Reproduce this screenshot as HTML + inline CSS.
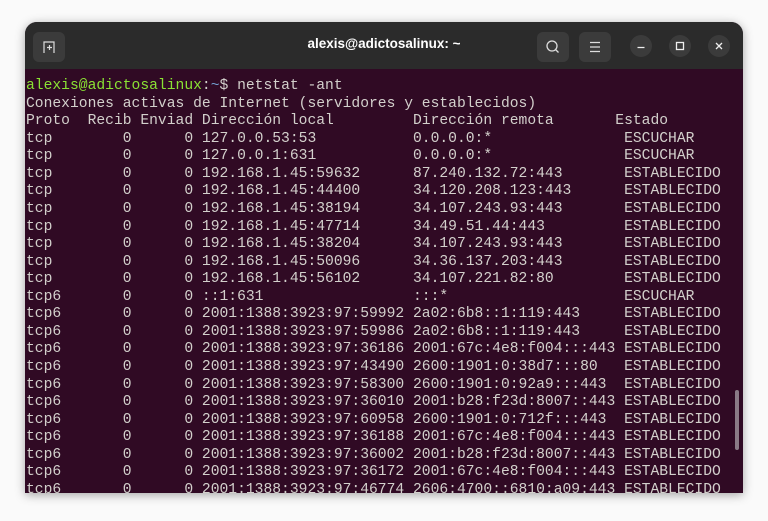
<!DOCTYPE html>
<html><head><meta charset="utf-8"><style>
html,body{margin:0;padding:0;width:768px;height:521px;background:#fafafa;overflow:hidden}
.win{position:absolute;left:25px;top:22px;width:718px;height:471px;border-radius:12px 12px 0 0;overflow:hidden;background:#300a24;box-shadow:0 2px 10px rgba(0,0,0,.35)}
.tb{position:absolute;left:0;top:0;width:718px;height:47px;background:#2b2b2b}
.title{position:absolute;left:0;right:0;top:14px;text-align:center;color:#fff;font:bold 13.5px "Liberation Sans",sans-serif}
.btn{position:absolute;top:10px;width:32px;height:30px;background:#3b3b3b;border-radius:6px}
.cb{position:absolute;top:13px;width:22px;height:22px;border-radius:50%;background:#3b3b3b}
pre{position:absolute;left:1px;top:56px;margin:0;font:14.67px/17.57px "Liberation Mono",monospace;color:#d3d0cc;white-space:pre}
.g{color:#8ae234}.b{color:#729fcf}
.sb{position:absolute;left:710px;top:368px;width:4px;height:60px;border-radius:2px;background:#8a7a86}
</style></head><body>
<div class="win">
<div class="tb">
<div class="btn" style="left:8px"><svg width="32" height="30"><path d="M11 21V10h10v11M14 15.5h5M16.5 13v5" stroke="#ddd" stroke-width="1.2" fill="none"/></svg></div>
<div class="title">alexis@adictosalinux: ~</div>
<div class="btn" style="left:512px"><svg width="32" height="30"><circle cx="15" cy="14" r="5" stroke="#ddd" stroke-width="1.3" fill="none"/><path d="M18.5 17.5l3 3" stroke="#ddd" stroke-width="1.3"/></svg></div>
<div class="btn" style="left:554px"><svg width="32" height="30"><path d="M11 10.5h10M11 15h10M11 19.5h10" stroke="#ddd" stroke-width="1.2"/></svg></div>
<div class="cb" style="left:605px"><svg width="22" height="22"><path d="M7.5 12.5h7" stroke="#eee" stroke-width="1.3"/></svg></div>
<div class="cb" style="left:644px"><svg width="22" height="22"><rect x="7.5" y="7.5" width="7" height="7" stroke="#eee" stroke-width="1.3" fill="none"/></svg></div>
<div class="cb" style="left:683px"><svg width="22" height="22"><path d="M8 8l6 6M14 8l-6 6" stroke="#eee" stroke-width="1.3"/></svg></div>
</div>
<pre><span class="g">alexis@adictosalinux</span>:<span class="b">~</span>$ netstat -ant
Conexiones activas de Internet (servidores y establecidos)
Proto  Recib Enviad Dirección local         Dirección remota       Estado
tcp        0      0 127.0.0.53:53           0.0.0.0:*               ESCUCHAR
tcp        0      0 127.0.0.1:631           0.0.0.0:*               ESCUCHAR
tcp        0      0 192.168.1.45:59632      87.240.132.72:443       ESTABLECIDO
tcp        0      0 192.168.1.45:44400      34.120.208.123:443      ESTABLECIDO
tcp        0      0 192.168.1.45:38194      34.107.243.93:443       ESTABLECIDO
tcp        0      0 192.168.1.45:47714      34.49.51.44:443         ESTABLECIDO
tcp        0      0 192.168.1.45:38204      34.107.243.93:443       ESTABLECIDO
tcp        0      0 192.168.1.45:50096      34.36.137.203:443       ESTABLECIDO
tcp        0      0 192.168.1.45:56102      34.107.221.82:80        ESTABLECIDO
tcp6       0      0 ::1:631                 :::*                    ESCUCHAR
tcp6       0      0 2001:1388:3923:97:59992 2a02:6b8::1:119:443     ESTABLECIDO
tcp6       0      0 2001:1388:3923:97:59986 2a02:6b8::1:119:443     ESTABLECIDO
tcp6       0      0 2001:1388:3923:97:36186 2001:67c:4e8:f004:::443 ESTABLECIDO
tcp6       0      0 2001:1388:3923:97:43490 2600:1901:0:38d7:::80   ESTABLECIDO
tcp6       0      0 2001:1388:3923:97:58300 2600:1901:0:92a9:::443  ESTABLECIDO
tcp6       0      0 2001:1388:3923:97:36010 2001:b28:f23d:8007::443 ESTABLECIDO
tcp6       0      0 2001:1388:3923:97:60958 2600:1901:0:712f:::443  ESTABLECIDO
tcp6       0      0 2001:1388:3923:97:36188 2001:67c:4e8:f004:::443 ESTABLECIDO
tcp6       0      0 2001:1388:3923:97:36002 2001:b28:f23d:8007::443 ESTABLECIDO
tcp6       0      0 2001:1388:3923:97:36172 2001:67c:4e8:f004:::443 ESTABLECIDO
tcp6       0      0 2001:1388:3923:97:46774 2606:4700::6810:a09:443 ESTABLECIDO</pre>
<div class="sb"></div>
</div>
</body></html>
